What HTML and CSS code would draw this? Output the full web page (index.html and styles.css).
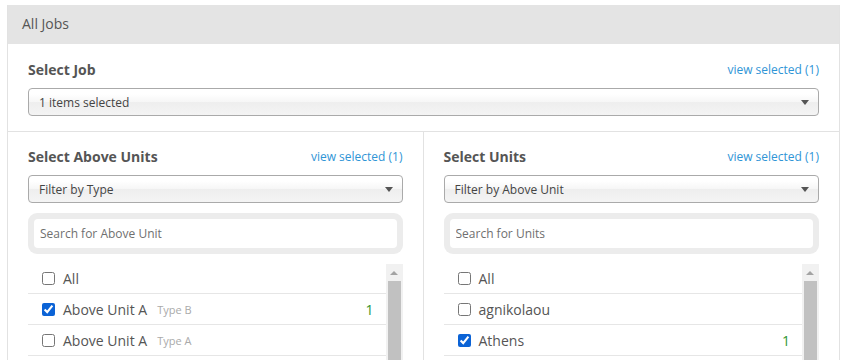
FILE: index.html
```html
<!DOCTYPE html>
<html lang="en">

<head>
    <meta charset="UTF-8">
    <meta name="viewport" content="width=device-width, initial-scale=1.0">
    <title>All Jobs</title>
    <link rel="stylesheet" href="styles.css">
</head>

<body>
    <div class="panel">
        <div class="panel_head">All Jobs</div>

        <div class="job_section">
            <div class="section_title">
                <h3>Select Job</h3>
                <a href="#">view selected (1)</a>
            </div>
            <div class="dropdown"><span>1 items selected</span><i class="caret"></i></div>
        </div>

        <div class="columns">
            <div class="column">
                <div class="section_title">
                    <h3>Select Above Units</h3>
                    <a href="#">view selected (1)</a>
                </div>
                <div class="dropdown"><span>Filter by Type</span><i class="caret"></i></div>
                <div class="search_box"><input type="text" placeholder="Search for Above Unit"></div>
                <div class="list">
                    <ul class="items">
                        <li><label><input type="checkbox">All</label></li>
                        <li><label><input type="checkbox" checked>Above Unit A<small>Type B</small></label><span class="count">1</span></li>
                        <li><label><input type="checkbox">Above Unit A<small>Type A</small></label></li>
                    </ul>
                    <div class="scrollbar">
                        <div class="scroll_btn"></div>
                        <div class="scroll_thumb"></div>
                    </div>
                </div>
            </div>

            <div class="column">
                <div class="section_title">
                    <h3>Select Units</h3>
                    <a href="#">view selected (1)</a>
                </div>
                <div class="dropdown"><span>Filter by Above Unit</span><i class="caret"></i></div>
                <div class="search_box"><input type="text" placeholder="Search for Units"></div>
                <div class="list">
                    <ul class="items">
                        <li><label><input type="checkbox">All</label></li>
                        <li><label><input type="checkbox">agnikolaou</label></li>
                        <li><label><input type="checkbox" checked>Athens</label><span class="count">1</span></li>
                    </ul>
                    <div class="scrollbar">
                        <div class="scroll_btn"></div>
                        <div class="scroll_thumb"></div>
                    </div>
                </div>
            </div>
        </div>
    </div>
</body>

</html>
```

FILE: styles.css
```css
* {
    margin: 0;
    padding: 0;
    box-sizing: border-box;
}

html,
body {
    height: 360px;
    overflow: hidden;
}

body {
    font-family: "Open Sans", "Liberation Sans", sans-serif;
    color: #555;
    background: #fff;
    padding: 5px 9px 0 7px;
}

.panel {
    border: 1px solid #e2e2e2;
    border-top: none;
}

.panel_head {
    height: 39px;
    padding-left: 14px;
    line-height: 38px;
    font-size: 14px;
    background-color: #e4e4e4;
}

.job_section {
    padding: 15px 20px 15px;
    border-bottom: 1px solid #e2e2e2;
}

.section_title {
    display: flex;
    justify-content: space-between;
    align-items: center;
    height: 20px;
    margin-bottom: 9px;
}

.section_title h3 {
    font-size: 14px;
    font-weight: 700;
    color: #555;
}

.section_title a {
    font-size: 12px;
    color: #2f95d6;
    text-decoration: none;
}

.dropdown {
    display: flex;
    justify-content: space-between;
    align-items: center;
    height: 28px;
    padding: 0 9px 0 10px;
    border: 1px solid #aaa;
    border-radius: 4px;
    font-size: 12px;
    color: #444;
    background: linear-gradient(to bottom, #fff 20%, #f6f6f6 50%, #eee 52%, #f4f4f4 100%);
}

.caret {
    width: 0;
    height: 0;
    border-left: 4.5px solid transparent;
    border-right: 4.5px solid transparent;
    border-top: 5px solid #555;
}

.columns {
    display: grid;
    grid-template-columns: 1fr 1fr;
}

.column {
    padding: 14px 20px 0;
}

.column:first-child {
    border-right: 1px solid #e2e2e2;
}

.search_box {
    margin-top: 10px;
    padding: 6px;
    border-radius: 9px;
    background-color: #ececec;
}

.search_box input {
    display: block;
    width: 100%;
    height: 29px;
    padding: 0 6px;
    border: none;
    border-radius: 4px;
    outline: none;
    font-family: inherit;
    font-size: 12px;
    color: #555;
    background: #fff;
}

.search_box input::placeholder {
    color: #6f6f6f;
}

.list {
    display: flex;
    margin-top: 10px;
    height: 200px;
}

.items {
    flex: 1;
    list-style: none;
}

.items li {
    display: flex;
    justify-content: space-between;
    align-items: center;
    height: 31px;
    padding: 0 12px 0 14px;
    border-bottom: 1px solid #e6e6e6;
    font-size: 14px;
}

.items li:first-child {
    height: 30px;
}

.items label {
    display: flex;
    align-items: center;
}

.items input {
    width: 13px;
    height: 13px;
    margin: 0 8px 0 0;
    accent-color: #0b63d6;
}

.items small {
    margin-left: 10px;
    font-size: 11px;
    color: #aaa;
}

.count {
    color: #2f962f;
}

.scrollbar {
    width: 17px;
    background-color: #f1f1f1;
}

.scroll_btn {
    position: relative;
    height: 17px;
}

.scroll_btn::after {
    content: "";
    position: absolute;
    top: 7px;
    left: 4px;
    border-left: 4px solid transparent;
    border-right: 4px solid transparent;
    border-bottom: 4px solid #a3a3a3;
}

.scroll_thumb {
    height: 180px;
    margin: 0 2px;
    background-color: #c1c1c1;
}
```
